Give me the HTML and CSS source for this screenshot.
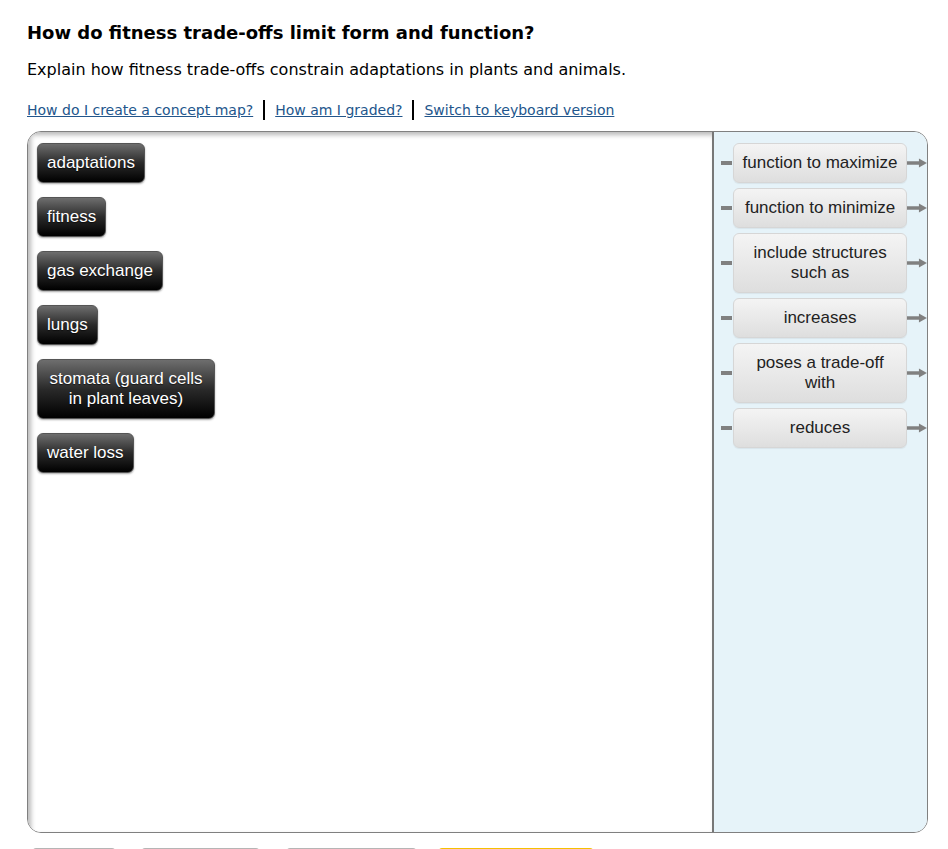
FILE: index.html
```html
<!DOCTYPE html>
<html lang="en">
<head>
<meta charset="utf-8">
<title>Concept map</title>
<link rel="stylesheet" href="styles.css">
</head>
<body>
<main class="page">
  <h1 class="title">How do fitness trade-offs limit form and function?</h1>
  <p class="prompt">Explain how fitness trade-offs constrain adaptations in plants and animals.</p>
  <nav class="help-links">
    <a href="#">How do I create a concept map?</a>
    <span class="sep"></span>
    <a href="#">How am I graded?</a>
    <span class="sep"></span>
    <a href="#">Switch to keyboard version</a>
  </nav>
  <section class="map">
    <div class="canvas">
      <div class="concept">adaptations</div>
      <div class="concept">fitness</div>
      <div class="concept">gas exchange</div>
      <div class="concept">lungs</div>
      <div class="concept">stomata (guard cells in plant leaves)</div>
      <div class="concept">water loss</div>
    </div>
    <aside class="linkbank">
      <div class="link-row"><span class="dash"></span><div class="link-chip">function to maximize</div><svg class="arrow" viewBox="0 0 20 10"><path d="M0 5H13" /><polygon points="12,0.5 20,5 12,9.5"/></svg></div>
      <div class="link-row"><span class="dash"></span><div class="link-chip">function to minimize</div><svg class="arrow" viewBox="0 0 20 10"><path d="M0 5H13" /><polygon points="12,0.5 20,5 12,9.5"/></svg></div>
      <div class="link-row"><span class="dash"></span><div class="link-chip">include structures such as</div><svg class="arrow" viewBox="0 0 20 10"><path d="M0 5H13" /><polygon points="12,0.5 20,5 12,9.5"/></svg></div>
      <div class="link-row"><span class="dash"></span><div class="link-chip">increases</div><svg class="arrow" viewBox="0 0 20 10"><path d="M0 5H13" /><polygon points="12,0.5 20,5 12,9.5"/></svg></div>
      <div class="link-row"><span class="dash"></span><div class="link-chip">poses a trade-off with</div><svg class="arrow" viewBox="0 0 20 10"><path d="M0 5H13" /><polygon points="12,0.5 20,5 12,9.5"/></svg></div>
      <div class="link-row"><span class="dash"></span><div class="link-chip">reduces</div><svg class="arrow" viewBox="0 0 20 10"><path d="M0 5H13" /><polygon points="12,0.5 20,5 12,9.5"/></svg></div>
    </aside>
  </section>
  <div class="actions">
    <button class="btn btn-a" aria-label="Undo"></button>
    <button class="btn btn-b" aria-label="Reset"></button>
    <button class="btn btn-c" aria-label="Request answer"></button>
    <button class="btn btn-submit" aria-label="Submit"></button>
  </div>
</main>
</body>
</html>
```

FILE: styles.css
```css
* { box-sizing: border-box; }

html, body {
  margin: 0;
  padding: 0;
  background: #ffffff;
}

.page {
  padding: 22px 20px 0 27px;
  font-family: "DejaVu Sans", Verdana, sans-serif;
  color: #000;
}

.title {
  margin: 0;
  font-size: 18px;
  line-height: 22px;
  font-weight: bold;
}

.prompt {
  margin: 15px 0 0;
  font-size: 16px;
  line-height: 22px;
}

.help-links {
  display: flex;
  align-items: center;
  margin-top: 18px;
  height: 22px;
  font-size: 14px;
}

.help-links a {
  color: #22568c;
  text-decoration: underline;
}

.sep {
  display: inline-block;
  width: 2px;
  height: 20px;
  background: #000;
  margin: 0 10px;
}

.map {
  margin-top: 10px;
  width: 901px;
  height: 702px;
  display: grid;
  grid-template-columns: 1fr 215px;
  border: 1px solid #808080;
  border-radius: 14px;
  overflow: hidden;
}

.canvas {
  display: flex;
  flex-direction: column;
  align-items: flex-start;
  gap: 14px;
  padding: 11px 9px;
  background: #fff;
  box-shadow: inset 3px 3px 5px rgba(0, 0, 0, 0.28);
}

.concept {
  font-family: "Liberation Sans", Arial, sans-serif;
  font-size: 17px;
  line-height: 20px;
  color: #fff;
  text-align: center;
  max-width: 178px;
  padding: 9px 9px;
  border: 1px solid #555;
  border-radius: 6px;
  background: linear-gradient(#6e6e6e 0%, #2a2a2a 50%, #000 100%);
  box-shadow: 0 1px 2px rgba(0, 0, 0, 0.35);
  text-shadow: 0 1px 1px rgba(0, 0, 0, 0.6);
}

.linkbank {
  border-left: 2px solid #777;
  background: #e6f3f9;
  padding: 11px 0 0 7px;
  display: flex;
  flex-direction: column;
  gap: 5px;
}

.link-row {
  display: flex;
  align-items: center;
}

.dash {
  width: 11px;
  height: 4px;
  background: #808080;
  margin-right: 1px;
}

.link-chip {
  width: 175px;
  font-family: "Liberation Sans", Arial, sans-serif;
  font-size: 17px;
  line-height: 20px;
  color: #222;
  text-align: center;
  padding: 9px 8px;
  border: 1px solid #d6d6d6;
  border-radius: 6px;
  background: linear-gradient(#f4f4f4, #dedede);
  box-shadow: 0 1px 1px rgba(0, 0, 0, 0.06);
}

.arrow {
  width: 20px;
  height: 10px;
  margin-left: 0;
  display: block;
}

.arrow path {
  stroke: #808080;
  stroke-width: 3.5;
  fill: none;
}

.arrow polygon {
  fill: #808080;
}

.actions {
  display: flex;
  margin-top: 15px;
  padding-left: 6px;
}

.btn {
  height: 34px;
  border: 1px solid #bbb;
  border-top: 2px solid #b5b5b5;
  border-radius: 3px;
  background: #fff;
}

.btn-a { width: 82px; }
.btn-b { width: 117px; margin-left: 27px; }
.btn-c { width: 129px; margin-left: 28px; }
.btn-submit {
  width: 154px;
  margin-left: 23px;
  border-color: #f0b800;
  border-top-color: #f5c000;
  background: #ffd33d;
}
```
